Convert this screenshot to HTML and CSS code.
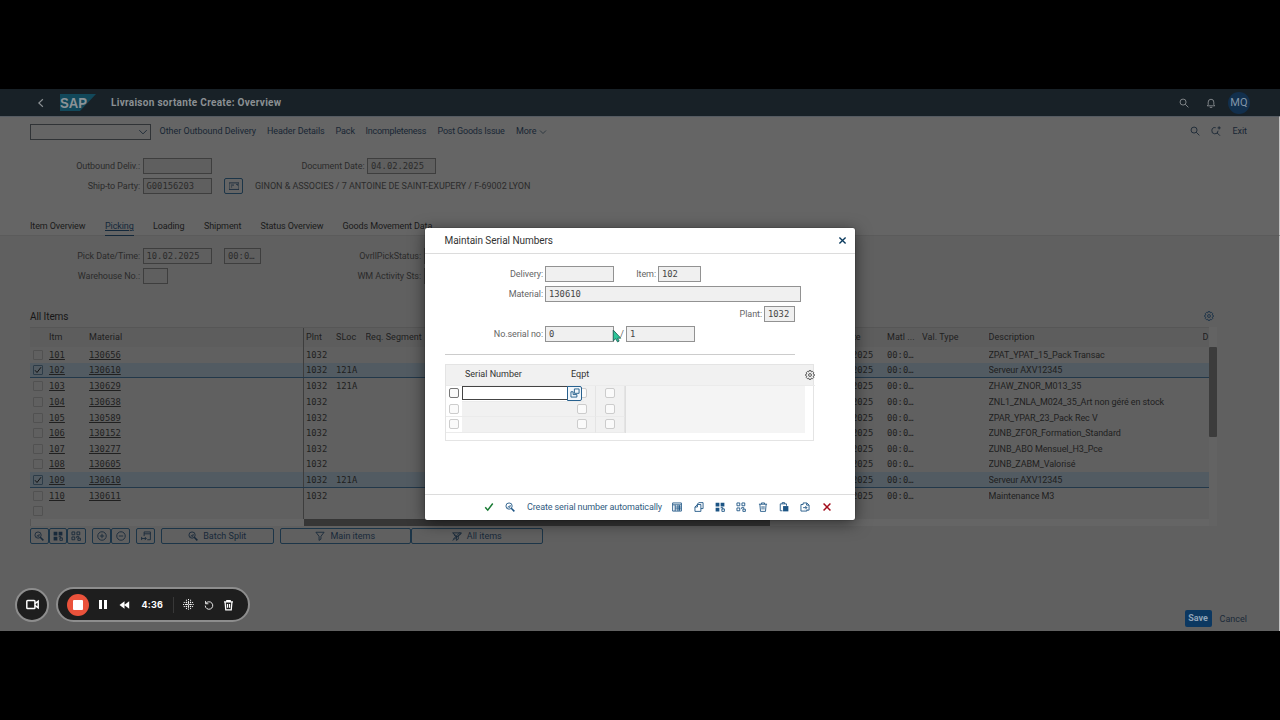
FILE: index.html
```html
<!DOCTYPE html>
<html lang="en">
<head>
<meta charset="utf-8">
<title>Livraison sortante Create: Overview</title>
<link rel="stylesheet" href="styles.css">
</head>
<body>
<svg class="defs" aria-hidden="true">
  <symbol id="search" viewBox="0 0 16 16"><circle cx="6.5" cy="6.5" r="4.8"/><path d="M10 10l5 5"/></symbol>
  <symbol id="search-plus" viewBox="0 0 16 16"><path d="M11.3 7.5a5 5 0 1 1-3.8-4.8M9.8 11l4.5 4.5M13 .5v5M10.5 3h5"/></symbol>
  <symbol id="detail" viewBox="0 0 16 16"><circle cx="6.5" cy="6.5" r="5"/><path d="M10 10l5 5" stroke-width="2.4"/><path d="M4 8.5l5-3M6 9l3-1.5"/></symbol>
  <symbol id="bell" viewBox="0 0 16 16"><path d="M2 12.5h12l-1.5-2V6.5a4.5 4.5 0 0 0-9 0v4zM6 15h4"/></symbol>
  <symbol id="chev" viewBox="0 0 16 16"><path d="M2 5l6 6 6-6"/></symbol>
  <symbol id="back" viewBox="0 0 16 16"><path d="M11 2L4.500 8l6.500 6"/></symbol>
  <symbol id="card" viewBox="0 0 16 16"><path d="M0 3h16v10.500H0zM3 6.500h5M3 9.500h2M11.500 5.500h2.500v2"/></symbol>
  <symbol id="gear" viewBox="0 0 16 16"><circle cx="8" cy="8" r="2.300"/><path d="M6.500 1h3l.6 2 2-.8 1.900 2.200-1 1.800 2 .9v2l-2 .9 1 1.800-2 2.100-1.900-.8-.6 1.900h-3l-.6-1.900-2 .8L2 11.800 3 10 1 9V7l2-.8-1-1.800 2-2.200 1.900.8z"/></symbol>
  <symbol id="select-all" viewBox="0 0 16 16"><path class="fill" d="M1 1h6v6H1zM9 1h6v6H9zM1 9h6v6H1z"/><path d="M9.500 10v-1h3v3M11 11h4v4h-4z"/></symbol>
  <symbol id="deselect" viewBox="0 0 16 16"><path d="M1.500 1.500h4.500v4.500H1.500zM9.500 1.500H14v4.500H9.500zM1.500 9.500H6V14H1.500zM9 11V9h3.500v2M11 11.500h4V15h-4z"/></symbol>
  <symbol id="plus" viewBox="0 0 16 16"><circle cx="8" cy="8" r="6.800"/><path d="M8 4.500v7M4.500 8h7"/></symbol>
  <symbol id="minus" viewBox="0 0 16 16"><circle cx="8" cy="8" r="6.800"/><path d="M4.500 8h7"/></symbol>
  <symbol id="insert" viewBox="0 0 16 16"><path d="M5 8V1.500h10V14H10M5 4.500h10M1 9.500v5M1 12h7M6 9.500L8.500 12 6 14.500"/></symbol>
  <symbol id="filter" viewBox="0 0 16 16"><path d="M1.500 2h13L9.500 8.500V13L6.500 15V8.500z"/></symbol>
  <symbol id="nofilter" viewBox="0 0 16 16"><path d="M1 3h14l-5 5v5l-3 2V8zM2 13L13 2M3 6l3 3M1 15L15 4"/></symbol>
  <symbol id="check" viewBox="0 0 16 16"><path d="M2 8.500l4 4.500L14 2.500"/></symbol>
  <symbol id="cross" viewBox="0 0 16 16"><path d="M2.500 2.500l11 11M13.500 2.500l-11 11"/></symbol>
  <symbol id="table" viewBox="0 0 16 16"><path d="M1 1.500h14v13H1zM1 4.500h14M5 4.500v10M9.500 4.500v10M5 8h10M5 11h10M12 5v9"/></symbol>
  <symbol id="copy" viewBox="0 0 16 16"><path d="M8 1H14.500v9.500H11M4.500 4L8 1M1.500 8L5.500 4H11v11H1.500zM5.500 4v4H1.500"/></symbol>
  <symbol id="trash" viewBox="0 0 16 16"><path d="M1.500 3.500h13M5.500 3.500V1.500h5v2M3 3.500L4 15h8l1-11.500M6.500 6.500v5.500M9.500 6.500v5.500"/></symbol>
  <symbol id="paste" viewBox="0 0 16 16"><path d="M5.500 14H2V3h10v3M5 3V1h4v2"/><path class="fill" d="M6.500 6.500H15V15H6.500z"/></symbol>
  <symbol id="pages" viewBox="0 0 16 16"><path d="M5 4V1.500h6L14.500 5v8H11M5 4H1.500v10.500H11V12M5 9h6M8.500 6.500L11 9l-2.500 2.500M10.500 2v3h4"/></symbol>
  <symbol id="valuehelp" viewBox="0 0 16 16"><path d="M7 1.500h7.500V8.500H7zM5 6H1.500v8.500h9.500V10.500M5 6v4.500h6"/></symbol>
  <symbol id="camera" viewBox="0 0 16 16"><rect x="1" y="3" width="10" height="10" rx="1"/><path d="M11 7l4-3v8l-4-3"/></symbol>
  <symbol id="rewind" viewBox="0 0 16 16"><path class="fill" d="M8 2v12L0 8zM15.500 2v12L7.500 8z"/></symbol>
  <symbol id="dots" viewBox="0 0 16 16"><path d="M5 1v14M8 0v16M11 1v14M1 5h14M0 8h16M1 11h14" stroke-dasharray="1.700 1.300"/></symbol>
  <symbol id="undo" viewBox="0 0 16 16"><path d="M3 5.500a6 6 0 1 1-1 3.500M2.500 1.500v4.500h4.500"/></symbol>
</svg>

<div class="screen">
  <header class="shell">
    <svg class="ic back"><use href="#back"/></svg>
    <svg class="logo" viewBox="0 0 36 17"><path d="M0 0h36L20 17H0z"/><text x="0" y="14" textLength="27" lengthAdjust="spacingAndGlyphs">SAP</text></svg>
    <h1>Livraison sortante Create: Overview</h1>
    <div class="shell-tools">
      <svg class="ic"><use href="#search"/></svg>
      <svg class="ic"><use href="#bell"/></svg>
      <span class="avatar">MQ</span>
    </div>
  </header>

  <nav class="toolbar">
    <div class="combo"><svg class="ic"><use href="#chev"/></svg></div>
    <a class="t1">Other Outbound Delivery</a><a class="t2">Header Details</a><a class="t3">Pack</a><a class="t4">Incompleteness</a><a class="t5">Post Goods Issue</a><a class="t6">More</a><svg class="ic small"><use href="#chev"/></svg>
    <div class="tool-end"><svg class="ic"><use href="#search"/></svg><svg class="ic"><use href="#search-plus"/></svg><a>Exit</a></div>
  </nav>

  <section class="form">
    <div class="frow"><label>Outbound Deliv.:</label><span class="field w69"></span><label class="second">Document Date:</label><span class="field w69">04.02.2025</span></div>
    <div class="frow"><label>Ship-to Party:</label><span class="field w69">G00156203</span><span class="btn cardbtn"><svg class="ic"><use href="#card"/></svg></span><span class="address">GINON &amp; ASSOCIES / 7 ANTOINE DE SAINT-EXUPERY / F-69002 LYON</span></div>
  </section>

  <nav class="tabs">
    <a class="b1">Item Overview</a><a class="b2"><span class="on">Picking</span></a><a class="b3">Loading</a><a class="b4">Shipment</a><a class="b5">Status Overview</a><a>Goods Movement Data</a>
  </nav>

  <main class="panel">
    <section class="form">
      <div class="frow"><label>Pick Date/Time:</label><span class="field w69">10.02.2025</span><span class="field time">00:0…</span><label class="third">OvrllPickStatus:</label><span class="field w69"></span></div>
      <div class="frow"><label>Warehouse No.:</label><span class="field w25"></span><label class="fourth">WM Activity Sts:</label><span class="field w69"></span></div>
    </section>
    <div class="list-title"><h2>All Items</h2><svg class="ic"><use href="#gear"/></svg></div>
    <div class="list">
      <div class="rows">
        <div class="row head"><i></i><b>Itm</b><b class="mat">Material</b><b class="pl">Plnt</b><b>SLoc</b><b>Req. Segment</b><b class="dt">Date</b><b>Matl ...</b><b>Val. Type</b><b>Description</b><b>D</b></div>
        <div class="row"><i class="box"></i><u>101</u><span class="mat"><u>130656</u></span><span class="pl">1032</span><span></span><span></span><span>2025</span><span>00:0…</span><span></span><em>ZPAT_YPAT_15_Pack Transac</em></div>
        <div class="row sel"><i class="box"><svg><use href="#check"/></svg></i><u>102</u><span class="mat"><u>130610</u></span><span class="pl">1032</span><span>121A</span><span></span><span>2025</span><span>00:0…</span><span></span><em>Serveur AXV12345</em></div>
        <div class="row"><i class="box"></i><u>103</u><span class="mat"><u>130629</u></span><span class="pl">1032</span><span>121A</span><span></span><span>2025</span><span>00:0…</span><span></span><em>ZHAW_ZNOR_M013_35</em></div>
        <div class="row"><i class="box"></i><u>104</u><span class="mat"><u>130638</u></span><span class="pl">1032</span><span></span><span></span><span>2025</span><span>00:0…</span><span></span><em>ZNL1_ZNLA_M024_35_Art non géré en stock</em></div>
        <div class="row"><i class="box"></i><u>105</u><span class="mat"><u>130589</u></span><span class="pl">1032</span><span></span><span></span><span>2025</span><span>00:0…</span><span></span><em>ZPAR_YPAR_23_Pack Rec V</em></div>
        <div class="row"><i class="box"></i><u>106</u><span class="mat"><u>130152</u></span><span class="pl">1032</span><span></span><span></span><span>2025</span><span>00:0…</span><span></span><em>ZUNB_ZFOR_Formation_Standard</em></div>
        <div class="row"><i class="box"></i><u>107</u><span class="mat"><u>130277</u></span><span class="pl">1032</span><span></span><span></span><span>2025</span><span>00:0…</span><span></span><em>ZUNB_ABO Mensuel_H3_Pce</em></div>
        <div class="row"><i class="box"></i><u>108</u><span class="mat"><u>130605</u></span><span class="pl">1032</span><span></span><span></span><span>2025</span><span>00:0…</span><span></span><em>ZUNB_ZABM_Valorisé</em></div>
        <div class="row sel"><i class="box"><svg><use href="#check"/></svg></i><u>109</u><span class="mat"><u>130610</u></span><span class="pl">1032</span><span>121A</span><span></span><span>2025</span><span>00:0…</span><span></span><em>Serveur AXV12345</em></div>
        <div class="row"><i class="box"></i><u>110</u><span class="mat"><u>130611</u></span><span class="pl">1032</span><span></span><span></span><span>2025</span><span>00:0…</span><span></span><em>Maintenance M3</em></div>
        <div class="row"><i class="box"></i><span></span><span class="mat"></span></div>
        <div class="hscroll"><div class="hthumb"></div></div>
      </div>
      <div class="vscroll"><div class="vthumb"></div></div>
    </div>
    <div class="actions">
      <span class="btn a"><svg class="ic"><use href="#detail"/></svg></span><span class="btn a"><svg class="ic"><use href="#select-all"/></svg></span><span class="btn a g7"><svg class="ic"><use href="#deselect"/></svg></span>
      <span class="btn b"><svg class="ic"><use href="#plus"/></svg></span><span class="btn b g6"><svg class="ic"><use href="#minus"/></svg></span>
      <span class="btn b g6"><svg class="ic"><use href="#insert"/></svg></span>
      <span class="btn batch g6"><svg class="ic"><use href="#detail"/></svg>Batch Split</span>
      <span class="btn wide"><svg class="ic"><use href="#filter"/></svg>Main items</span><span class="btn wide"><svg class="ic"><use href="#nofilter"/></svg>All items</span>
    </div>
    <footer class="foot"><span class="save">Save</span><a>Cancel</a></footer>
  </main>

  <div class="dialog">
    <div class="dhead"><h3>Maintain Serial Numbers</h3><svg class="ic navy"><use href="#cross"/></svg></div>
    <div class="dbody">
      <div class="frow"><label>Delivery:</label><span class="field w69"></span><label class="item">Item:</label><span class="field w43">102</span></div>
      <div class="frow"><label>Material:</label><span class="field w256">130610</span></div>
      <div class="frow"><label class="plant">Plant:</label><span class="field w31">1032</span></div>
      <div class="frow"><label>No.serial no:</label><span class="field w69">0</span><label class="slash">/</label><span class="field w69">1</span></div>
      <div class="rule"></div>
      <div class="serials">
        <div class="srow shead"><b></b><b>Serial Number</b><b class="eq">Eqpt</b><b></b><b class="cfg"><svg class="ic"><use href="#gear"/></svg></b></div>
        <div class="srow"><b class="white"><i class="cb dark"></i></b><b class="entry"><span class="input"></span><span class="help"><svg class="ic"><use href="#valuehelp"/></svg></span></b><b class="eqc"><i class="cb"></i></b><b class="mid"><i class="cb"></i></b><b class="rest"></b></div>
        <div class="srow"><b class="white"><i class="cb"></i></b><b></b><b class="eqc"><i class="cb"></i></b><b class="mid"><i class="cb"></i></b><b class="rest"></b></div>
        <div class="srow"><b class="white"><i class="cb"></i></b><b></b><b class="eqc"><i class="cb"></i></b><b class="mid"><i class="cb"></i></b><b class="rest"></b></div>
        <div class="sfoot"></div>
      </div>
    </div>
    <div class="dfoot">
      <span class="slot green"><svg class="ic"><use href="#check"/></svg></span><span class="slot"><svg class="ic"><use href="#detail"/></svg></span><a>Create serial number automatically</a>
      <span class="slot"><svg class="ic"><use href="#table"/></svg></span><span class="slot"><svg class="ic"><use href="#copy"/></svg></span><span class="slot"><svg class="ic"><use href="#select-all"/></svg></span><span class="slot"><svg class="ic"><use href="#deselect"/></svg></span><span class="slot"><svg class="ic"><use href="#trash"/></svg></span><span class="slot"><svg class="ic"><use href="#paste"/></svg></span><span class="slot"><svg class="ic"><use href="#pages"/></svg></span><span class="slot red"><svg class="ic"><use href="#cross"/></svg></span>
    </div>
  </div>

  <svg class="cursor" viewBox="0 0 9 13"><path d="M1 1v10l2.300-2 1.700 3 1.500-.8L5 8.500h3z"/></svg>

  <div class="recorder">
    <div class="cam"><svg class="ic"><use href="#camera"/></svg></div>
    <div class="pill">
      <span class="stop"><i></i></span><span class="pause"></span><svg class="ic rw"><use href="#rewind"/></svg><span class="clock">4:36</span><span class="sep"></span>
      <svg class="ic dots"><use href="#dots"/></svg><svg class="ic un"><use href="#undo"/></svg><svg class="ic tr"><use href="#trash"/></svg>
    </div>
  </div>
</div>
</body>
</html>
```

FILE: styles.css
```css
* { box-sizing: border-box; }
body { margin: 0; background: #000; font: 9px/12px Roboto, "Noto Sans", sans-serif; letter-spacing: -.08px; color: #202020; overflow: hidden; height: 720px; padding-top: 89px; white-space: nowrap; }
h1, h2, h3 { margin: 0; font-weight: 400; }
b, i, em { font-weight: 400; font-style: normal; }
.defs { display: none; }
svg { display: block; flex: none; }
.ic { width: 10px; height: 10px; fill: none; stroke: currentColor; stroke-width: 1.4; overflow: visible; }
.fill { fill: currentColor; stroke: none; }
.small { width: 8px; height: 8px; }

.screen { position: relative; width: 1280px; height: 542px; background: #656565; display: flex; flex-direction: column; }
.screen > .toolbar, .screen > .form, .screen > .tabs, .panel { border-right: 1px solid #c4c4c4; }
.shell { height: 27px; background: #182127; display: flex; align-items: center; color: #8b9093; padding-left: 36px; }
.shell .back { margin-right: 14px; stroke-width: 1.800; }
.logo { width: 36px; height: 17px; margin-right: 15px; }
.logo path { fill: #12485a; }
.logo text { font: bold 15px "Liberation Sans", sans-serif; fill: #8c9296; letter-spacing: 0; }
.shell h1 { font-size: 10px; font-weight: 700; letter-spacing: .29px; }
.shell-tools { margin-left: auto; display: flex; align-items: center; gap: 17px; padding-right: 30px; }
.avatar { width: 22px; height: 22px; border-radius: 50%; background: #122f4c; color: #8396a8; font-size: 11px; line-height: 22px; letter-spacing: .1px; display: flex; justify-content: center; margin-left: -5px; }

.toolbar { height: 30px; display: flex; align-items: center; padding-left: 30px; color: #182634; border-top: 1px solid #555b62; }
.toolbar > a, .tool-end { margin-top: -1px; }
.combo { width: 121px; height: 16px; border: 1px solid #303336; display: flex; align-items: center; justify-content: flex-end; padding-right: 2px; margin-right: 8.500px; }
.t1 { width: 107.500px; letter-spacing: -.03px; } .t2 { width: 68.500px; } .t3 { width: 30px; } .t4 { width: 72px; letter-spacing: -.24px; } .t5 { width: 78.500px; letter-spacing: -.2px; } .t6 { width: 22.500px; }
.tool-end { margin-left: auto; display: flex; align-items: center; gap: 11px; width: 89px; }
.tool-end a { margin-left: .500px; }

.form { padding-top: 10px; color: #2b2b2b; }
.frow { display: flex; align-items: center; height: 20px; }
.form label { width: 140px; text-align: right; margin-right: 2.500px; flex: none; }
.form label.second { width: 153px; }
.field { height: 16px; border: 1px solid #3e3e3e; background: #5f5f5f; font: 8.800px/14px "DejaVu Sans Mono", monospace; letter-spacing: 0; padding-left: 3px; flex: none; }
.w69 { width: 69px; } .w25 { width: 25px; } .w43 { width: 43px; } .w31 { width: 31px; } .w256 { width: 256px; }
.time { width: 37px; margin-left: 12.500px; }
.form label.third { width: 160px; }
.form label.fourth { width: 253.500px; }
.btn { border: 1px solid #1c3548; border-radius: 2px; height: 16px; display: flex; align-items: center; justify-content: center; color: #18293a; flex: none; }
.cardbtn { width: 19px; margin: 0 12px 0 12.500px; }
.address { letter-spacing: -.035px; }

.tabs { height: 40px; display: flex; padding: 24px 0 0 30px; color: #1a1a1a; border-bottom: 1px solid #5b5b5b; letter-spacing: -.11px; }
.b1 { width: 75px; } .b2 { width: 48px; color: #14283a; } .b3 { width: 51px; } .b4 { width: 56.500px; } .b5 { width: 82px; }
.on { display: inline-block; height: 16px; border-bottom: 1px solid #14283a; text-decoration: underline; }

.panel { flex: 1; background: #606060; }
.list-title { height: 41px; padding: 24px 65px 0 30px; display: flex; justify-content: space-between; }
.list-title h2 { font-size: 10px; line-height: 13px; color: #161616; }
.list-title svg { margin-top: 1px; color: #173047; }
.list { display: flex; width: 1187px; margin-left: 30px; }
.rows { width: 1179px; border-top: 1px solid #565656; }
.row { display: grid; grid-template-columns: 19px 40px 215px 32px 29.500px 486.500px 35px 35px 66.500px 214px 10px; height: 15.640px; align-items: center; overflow: hidden; font: 8.800px/12px "DejaVu Sans Mono", monospace; letter-spacing: 0; color: #202020; }
.row > * { overflow: hidden; }
.row b, .row em { font: 9px/12px Roboto, sans-serif; letter-spacing: -.09px; }
.row b { letter-spacing: .04px; }
.row.head { height: 19.200px; background: #5d5d5d; }
.row.head > b { padding-bottom: 2px; }
.row .mat { border-right: 1px solid #3d3d3d; align-self: stretch; display: flex; align-items: center; }
.row .pl { padding-left: 2px; }
.row .dt { margin-left: -10px; }
.row.sel { background: #525b62; border-bottom: 1.500px solid #22384a; }
.box { width: 10px; height: 10px; border: 1px solid #515151; border-radius: 1px; margin-left: 3px; }
.sel .box { border-color: #2c3b47; color: #111; }
.box svg { width: 8px; height: 8px; fill: none; stroke: currentColor; stroke-width: 2; }
.hscroll { height: 7px; background: #656565; padding-left: 273px; border-left: 1px solid #555; }
.hthumb { width: 466px; height: 7px; background: #363636; }
.vscroll { width: 8px; padding-top: 20px; background: #636363; }
.vthumb { height: 90px; background: #3c3c3c; border-radius: 1px; }
.actions { display: flex; margin: 2px 0 0 30px; letter-spacing: 0; }
.a { width: 18.500px; } .b { width: 19px; } .g7 { margin-right: 6.500px; } .g6 { margin-right: 6px; }
.batch { width: 112.500px; gap: 5px; } .wide { width: 131.500px; gap: 5px; }
.foot { display: flex; justify-content: flex-end; align-items: center; margin-top: 66px; padding-right: 32px; gap: 8px; color: #1b2a38; letter-spacing: 0; }
.save { background: #0c3861; color: #8fa3b7; font-weight: 700; height: 17px; line-height: 16px; width: 27px; text-align: center; border-radius: 2px; }

.dialog { position: absolute; left: 425px; top: 139px; width: 430px; height: 292px; background: #fff; border-radius: 2px; box-shadow: 0 3px 16px rgba(0,0,0,.55), 0 0 1px #000; display: flex; flex-direction: column; color: #666; }
.dhead { height: 25.500px; border-bottom: 1px solid #dcdcdc; display: flex; align-items: center; justify-content: space-between; padding: 0 8px 0 19.500px; }
.dhead h3 { font-size: 10px; line-height: 13px; color: #333; letter-spacing: -.05px; }
.dhead svg { width: 9px; height: 9px; stroke-width: 2.400; }
.navy { color: #0a3a5e; }
.dbody { flex: 1; padding-top: 10.500px; }
.dbody label { width: 118px; text-align: right; margin-right: 2px; flex: none; }
.dbody label.item { width: 42px; } .dbody label.plant { width: 337px; } .dbody label.slash { width: 10px; }
.dbody .field { background: #f0f0f0; border-color: #929292; color: #444; }
.rule { width: 350px; height: 1px; background: #ccc; margin: 9.500px 0 9.500px 20px; }
.serials { width: 369px; margin-left: 20px; border: 1px solid #e4e4e4; height: 77px; }
.srow { display: grid; grid-template-columns: 16px 108px 26px 29px 1fr; height: 15.700px; }
.shead { height: 20.500px; background: #f1f1f1; color: #333; line-height: 12px; letter-spacing: 0; }
.shead > :nth-child(2) { padding-left: 3px; }
.shead .eq { padding-left: 1px; }
.srow b { background: #f1f1f1; border-bottom: 1px solid #ebebeb; display: flex; align-items: center; }
.shead > b:not(.cfg) { padding-bottom: 2px; }
.srow .white { background: #fff; justify-content: center; }
.shead .cfg { justify-content: flex-end; margin-right: -2px; background: none; color: #444; }
.srow .eqc, .srow .mid { justify-content: center; border-right: 1px solid #e4e4e4; }
.srow .eqc { padding-right: 1px; }
.srow .rest { background: #f4f4f4; border-left: 1px solid #dedede; border-right: 8px solid #fff; border-bottom: 0; }
.cb { width: 10px; height: 10px; border: 1px solid #ccc; border-radius: 2px; background: #fafafa; flex: none; }
.cb.dark { border-color: #777; }
.srow .entry { position: relative; z-index: 1; margin-right: -14px; background: none; }
.input { width: 106px; height: 14px; background: #fff; border: 1px solid #444; }
.help { width: 15px; height: 15px; background: #f2f7fb; border: 1px solid #27608e; border-radius: 0 2px 2px 0; display: flex; align-items: center; justify-content: center; color: #175685; margin-left: -1px; }
.sfoot { height: 7px; background: #fff; }
.dfoot { height: 26px; border-top: 1px solid #dcdcdc; display: flex; align-items: center; padding: 0 0 1px 53.300px; color: #1c5484; }
.slot { width: 21.350px; display: flex; justify-content: center; }
.dfoot a { margin-left: 6px; width: 139.500px; color: #315c80; letter-spacing: -.13px; }
.green { color: #187a33; } .red { color: #a30d1c; }
.green svg, .red svg { stroke-width: 2.400; }
.cursor { position: absolute; left: 612px; top: 240px; width: 10px; height: 14px; fill: #2cc79a; stroke: #1d5d55; stroke-width: .8; }

.recorder { position: absolute; left: 15px; top: 498px; display: flex; gap: 6.500px; color: #fff; align-items: center; letter-spacing: 0; }
.cam { width: 34px; height: 34px; border-radius: 50%; background: #1e1e1e; border: 2px solid #8d8d8d; display: flex; align-items: center; justify-content: center; }
.cam svg { width: 13px; height: 13px; stroke-width: 1.800; }
.pill { width: 194.500px; height: 35px; border-radius: 18px; background: #1e1e1e; border: 2px solid #8d8d8d; display: flex; align-items: center; padding-left: 9.500px; }
.stop { width: 22px; height: 22px; border-radius: 50%; background: #ea523b; display: flex; align-items: center; justify-content: center; }
.stop i { width: 10px; height: 10px; background: #fff; border-radius: 1px; }
.pause { width: 8px; height: 9px; border: solid #fff; border-width: 0 3px; margin-left: 9.500px; }
.rw { width: 11px; margin-left: 12px; }
.clock { font: 700 9px/12px Inter, sans-serif; margin-left: 12px; width: 31px; letter-spacing: .2px; }
.sep { width: 1px; height: 16px; background: #383838; margin-right: 9px; }
.dots { width: 11px; height: 11px; } .un { margin-left: 10px; } .tr { margin-left: 9.500px; width: 11px; height: 12px; stroke-width: 1.800; }
```
